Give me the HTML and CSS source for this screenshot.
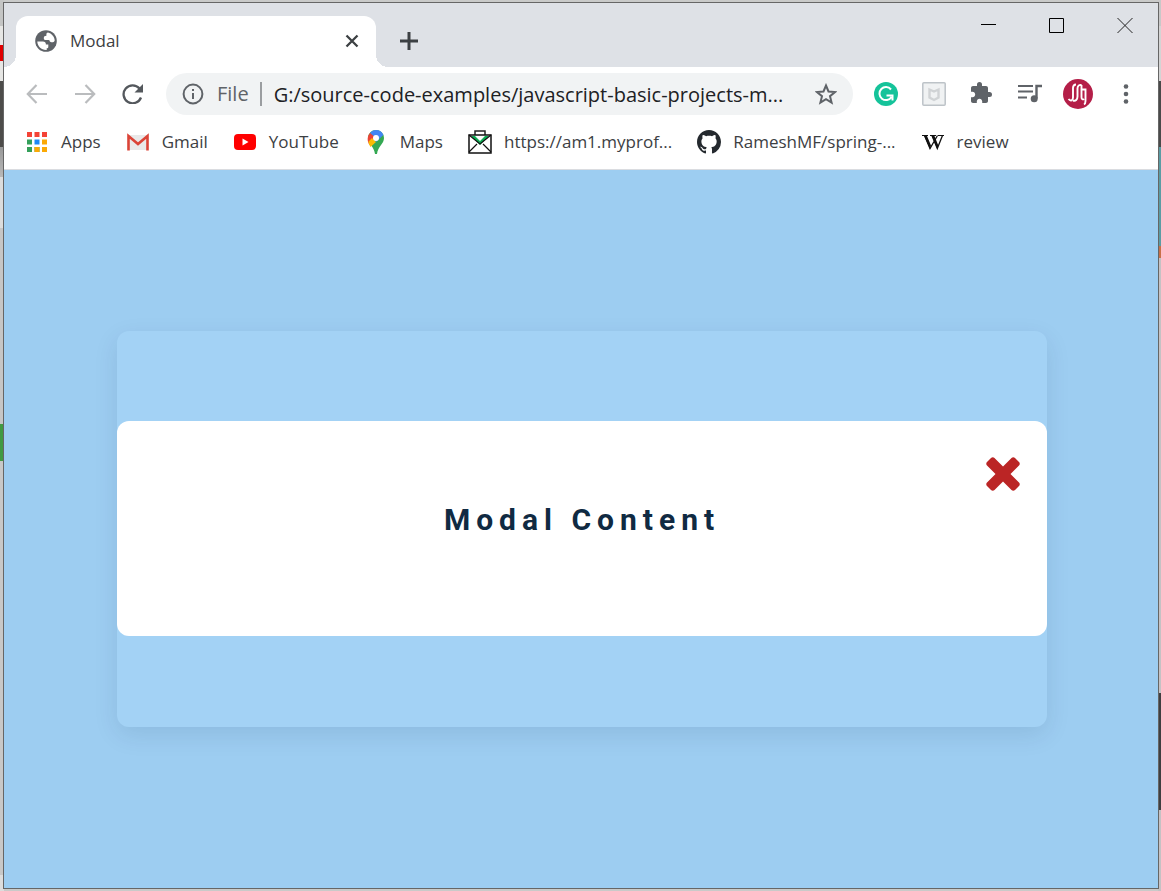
FILE: index.html
```html
<!DOCTYPE html>
<html lang="en">
<head>
  <meta charset="UTF-8">
  <title>Modal</title>
  <link rel="stylesheet" href="styles.css">
</head>
<body>
  <div class="window">
    <header class="tab-strip">
      <div class="tab">
        <svg class="globe" width="22" height="22" viewBox="0 0 22 22"><circle cx="11" cy="11" r="10.8" fill="#5f6368"/><path d="M2.3 11.6h5.6c2 0 3 1.2 3 3h2.4v2.3c0 .9-.6 1.300-1.600 1.300v1.700C6.500 20.200 2.500 16.500 2.300 11.600zM13 2.400c3.600.9 6.500 4.200 6.700 8-.6 1.700-1.800 2-3.200 1.900-1.300-.1-2.200-1-2.200-2.200h-3.600c-1.300 0-1.900-.8-1.900-1.900 0-1.600 1-2.400 2.600-2.400V4.300c0-1.100.5-1.700 1.600-1.900z" fill="#fff"/></svg>
        <span class="tab-title">Modal</span>
        <button class="icon-btn" aria-label="Close tab"><svg width="14" height="14" viewBox="0 0 14 14"><path d="M1.500 1.500l11 11M12.500 1.500l-11 11" stroke="#3c4043" stroke-width="2.300"/></svg></button>
      </div>
      <button class="icon-btn new-tab" aria-label="New tab"><svg width="18" height="18" viewBox="0 0 18 18"><path d="M9 0v18M0 9h18" stroke="#3c4043" stroke-width="3"/></svg></button>
      <div class="window-controls">
        <button class="icon-btn" aria-label="Minimize"><svg width="16" height="16" viewBox="0 0 16 16"><path d="M0 7.500h15" stroke="#000"/></svg></button>
        <button class="icon-btn" aria-label="Maximize"><svg width="16" height="16" viewBox="0 0 16 16"><path d="M.5 1.500h14v14H.5z" fill="none" stroke="#000"/></svg></button>
        <button class="icon-btn" aria-label="Close"><svg width="16" height="16" viewBox="0 0 16 16"><path d="M.5 1l15 15M15.500 1l-15 15" stroke="#222"/></svg></button>
      </div>
    </header>

    <div class="toolbar">
      <nav class="history">
        <button class="icon-btn" aria-label="Back"><svg width="22" height="20" viewBox="0 0 22 20"><path d="M21 10H2M10.500 1L1.800 10l8.700 9" fill="none" stroke="#babcbe" stroke-width="2.200"/></svg></button>
        <button class="icon-btn" aria-label="Forward"><svg width="22" height="20" viewBox="0 0 22 20"><path d="M1 10h19M11.500 1l8.700 9-8.700 9" fill="none" stroke="#babcbe" stroke-width="2.200"/></svg></button>
        <button class="icon-btn" aria-label="Reload"><svg width="22" height="20" viewBox="0 0 22 20"><path d="M19 13.500A9 9 0 1 1 17.500 4.500" fill="none" stroke="#54585d" stroke-width="2.300"/><path d="M21 0v8.500h-8.500z" fill="#54585d"/></svg></button>
      </nav>
      <div class="address">
        <svg width="22" height="22" viewBox="0 0 22 22"><circle cx="11" cy="11" r="9.400" fill="none" stroke="#5f6368" stroke-width="2"/><path d="M10 6h2v2h-2zM10 10h2v6h-2z" fill="#5f6368"/></svg>
        <label class="scheme" for="url">File</label>
        <input class="url" id="url" type="text" value="G:/source-code-examples/javascript-basic-projects-m...">
        <button class="icon-btn" aria-label="Bookmark this page"><svg width="22" height="22" viewBox="0 0 22 22"><path d="M11 2.500l2.500 6 6.500.5-5 4.200 1.600 6.400-5.600-3.500-5.600 3.500L7 13.200 2 9l6.500-.5z" fill="none" stroke="#5f6368" stroke-width="2"/></svg></button>
      </div>
      <div class="extensions">
        <button class="icon-btn" aria-label="Grammarly"><svg width="24" height="24" viewBox="0 0 24 24"><circle cx="12" cy="12" r="12" fill="#15c39a"/><path d="M17 7.500A6.500 6.500 0 1 0 17.500 15M12.500 13.500h6v5" fill="none" stroke="#fff" stroke-width="2"/></svg></button>
        <button class="icon-btn" aria-label="McAfee"><svg width="24" height="24" viewBox="0 0 24 24"><rect x=".8" y=".8" width="22.400" height="22.400" rx="1" fill="#f0f2f3" stroke="#bdc3c8" stroke-width="1.500"/><path d="M7.500 7.500l4.500 2 4.500-2v8L12 18l-4.500-2.500z" fill="none" stroke="#d0d3d5" stroke-width="2.400"/></svg></button>
        <button class="icon-btn" aria-label="Extensions"><svg width="24" height="24" viewBox="1 1 24 24"><path d="M20.500 11H19V7c0-1.100-.9-2-2-2h-4V3.500a2.500 2.500 0 0 0-5 0V5H4c-1.100 0-2 .9-2 2v3.800h1.500c1.500 0 2.700 1.200 2.700 2.700S5 16.200 3.500 16.200H2V20c0 1.100.9 2 2 2h3.800v-1.500c0-1.500 1.200-2.700 2.700-2.700s2.700 1.200 2.700 2.700V22H17c1.100 0 2-.9 2-2v-4h1.500a2.500 2.500 0 0 0 0-5z" fill="#5f6368"/></svg></button>
        <button class="icon-btn" aria-label="Media controls"><svg width="24" height="24" viewBox="0 0 24 24"><path d="M0 4h15M0 9.500h15M0 15.500h9" stroke="#5f6368" stroke-width="2.200"/><path d="M18.500 16.500V4H24" fill="none" stroke="#5f6368" stroke-width="2.400"/><circle cx="16.200" cy="16.800" r="3.500" fill="#5f6368"/></svg></button>
        <button class="icon-btn profile" aria-label="Profile"><svg width="30" height="30" viewBox="0 0 30 30"><circle cx="15" cy="15" r="15" fill="#b41e48"/><path d="M5.500 20c2 2.500 4.500 1.500 4.500-1.500V9c0-2.500 1-3.500 3-3.500M10 21.500c2.500 1 4.500-1 4.500-4V9.500c0-2.500 1.500-4 4-3.500M18.500 6v12c0 2 1 3 2.500 2M17.500 10.500h5v11.500c0 2-.5 3-1.500 3.500" fill="none" stroke="#fff" stroke-width="1.900"/></svg></button>
        <button class="icon-btn" aria-label="Menu"><svg width="6" height="20" viewBox="0 0 6 20"><g fill="#5f6368"><circle cx="3" cy="2.500" r="2.300"/><circle cx="3" cy="10" r="2.300"/><circle cx="3" cy="17.500" r="2.300"/></g></svg></button>
      </div>
    </div>

    <nav class="bookmarks">
      <a href="#"><svg width="24" height="24" viewBox="0 0 24 24"><path d="M2 2h5v5H2zM9.500 2h5v5h-5zM17 2h5v5h-5z" fill="#f44336"/><path d="M2 9.500h5v5H2zM2 17h5v5H2zM9.500 17h5v5h-5z" fill="#34a05a"/><path d="M9.500 9.500h5v5h-5z" fill="#1e88f5"/><path d="M17 9.500h5v5h-5zM17 17h5v5h-5zM9.500 17h5v5h-5z" fill="#fba905"/></svg><span>Apps</span></a>
      <a href="#"><svg width="24" height="24" viewBox="0 0 24 24"><path d="M2 5h20v15H2z" fill="#e9e9e9"/><path d="M2.500 20.500V6l9.500 8 9.500-8v14.500" fill="none" stroke="#db4437" stroke-width="2.600"/></svg><span>Gmail</span></a>
      <a href="#"><svg width="24" height="24" viewBox="0 0 24 24"><rect x="1" y="4" width="22" height="16" rx="4" fill="#f00"/><path d="M9.500 8.500l6 3.500-6 3.500z" fill="#fff"/></svg><span>YouTube</span></a>
      <a href="#"><svg width="24" height="24" viewBox="0 0 24 24"><path d="M12 0a8 8 0 0 1 8 8c0 6-6 8-7 16h-2C10 16 4 14 4 8a8 8 0 0 1 8-8z" fill="#34a853"/><path d="M12 0a8 8 0 0 1 7.300 5L12 12 6 3C7.500 1 9.600 0 12 0z" fill="#4285f4"/><path d="M6 3l6 5-6.500 7C2.500 10 3.500 6 6 3z" fill="#ea4335"/><path d="M4.500 11.500L8 8l4 4-5.500 5c-1-1.800-2-3.500-2-5.500z" fill="#fbbc04"/><circle cx="12" cy="8" r="3" fill="#fff"/></svg><span>Maps</span></a>
      <a href="#"><svg width="24" height="24" viewBox="0 0 24 24"><path d="M7 5V1h10v4" fill="none" stroke="#222" stroke-width="1.500"/><path d="M1 5h22v18H1z" fill="#fff" stroke="#111" stroke-width="1.500"/><path d="M3 6h4l5 5 5-5h4l-9 9z" fill="#0cad53"/><path d="M1 5l11 9L23 5M1 22l8-8M23 22l-8-8" fill="none" stroke="#111" stroke-width="1.200"/></svg><span>https://am1.myprof...</span></a>
      <a href="#"><svg width="24" height="24" viewBox="0 0 16 16"><path fill="#24292e" d="M8 0C3.580 0 0 3.580 0 8c0 3.540 2.290 6.530 5.470 7.590.4.070.55-.17.55-.38 0-.19-.01-.82-.01-1.490-2.010.37-2.530-.49-2.690-.94-.09-.23-.48-.94-.82-1.130-.28-.15-.68-.52-.01-.53.63-.01 1.080.58 1.230.82.720 1.210 1.870.87 2.330.66.070-.52.280-.87.510-1.070-1.780-.2-3.640-.89-3.640-3.950 0-.87.310-1.590.82-2.150-.08-.2-.36-1.020.08-2.120 0 0 .67-.21 2.200.82.640-.18 1.320-.27 2-.27s1.360.09 2 .27c1.530-1.040 2.200-.82 2.200-.82.440 1.100.160 1.920.08 2.120.510.56.820 1.270.820 2.150 0 3.070-1.870 3.750-3.650 3.950.290.250.540.730.540 1.480 0 1.070-.01 1.930-.01 2.200 0 .210.150.460.550.380A8.010 8.010 0 0 0 16 8c0-4.420-3.580-8-8-8z"/></svg><span>RameshMF/spring-...</span></a>
      <a href="#"><svg width="24" height="24" viewBox="0 0 24 24"><path d="M1 5.500h6M9 5.500h6M17 5.500h6" stroke="#111" stroke-width="1.200"/><path d="M3.500 5.500L9 18.500l7.500-13M11 5.500l5.300 13L21.500 5.500" fill="none" stroke="#111" stroke-width="1.300"/><path d="M3 5.500h2.800l4.200 10-1 3.500zM10.500 5.500h2.800l4 10-1 3.500z" fill="#111"/></svg><span>review</span></a>
    </nav>

    <main class="page">
      <section class="banner">
        <div class="modal">
          <h3>Modal Content</h3>
          <button class="close-btn" aria-label="Close modal"><svg width="34" height="34" viewBox="0 0 34 34"><path d="M1 8.500c-1-1-1-2.500 0-3.500l4-4c1-1 2.500-1 3.500 0L17 9.500 25.500 1c1-1 2.500-1 3.500 0l4 4c1 1 1 2.500 0 3.500L24.500 17l8.500 8.500c1 1 1 2.500 0 3.500l-4 4c-1 1-2.500 1-3.500 0L17 24.500 8.500 33c-1 1-2.500 1-3.500 0l-4-4c-1-1-1-2.500 0-3.500L9.500 17z" fill="#bb2525"/></svg></button>
        </div>
      </section>
    </main>
  </div>
</body>
</html>
```
FILE: styles.css
```css
:root {
  --page-color: #9dcdf1;
  --banner-color: #a3d2f5;
  --strip-color: #dee1e6;
  --icon-color: #5f6368;
  --text-color: #3c4043;
}

* {
  box-sizing: border-box;
}

/* slivers of the windows behind show at both edges */
body {
  margin: 0;
  padding: 2px 2px 2px 3px;
  min-height: 100vh;
  display: flex;
  font-family: "Open Sans", "Noto Sans", sans-serif;
  color: var(--text-color);
  background:
    linear-gradient(#c4c5c4 26px, #e6e6e4 26px 45px, #e00000 45px 61px, #e6e6e4 61px 81px, #4d4c4a 81px 147px, #999 147px, #b8b8b8 177px, #dcdcdc 177px 228px, #c6c6c6 228px 424px, #409a42 424px 461px, #c8c8c8 461px 875px, #ddd 875px) left / 4px 100% no-repeat,
    linear-gradient(#c8c8c8 26px, #d4d4d4 26px 81px, #4a4a4a 81px 147px, #5b9ca4 147px 246px, #c87048 246px 258px, #c4c2c4 258px 693px, #3f3f41 693px 810px, #c4c2c4 810px) right / 3px 100% no-repeat,
    #c9cac9;
}

.window {
  flex: 1;
  display: flex;
  flex-direction: column;
  border: 1px solid #666;
  background: #fff;
}

.icon-btn {
  display: flex;
  align-items: center;
  justify-content: center;
  padding: 0;
  border: none;
  background: transparent;
  cursor: pointer;
}

.tab-strip {
  display: flex;
  height: 64px;
  padding: 13px 25px 0 12px;
  background: var(--strip-color);
}

.tab {
  position: relative;
  display: flex;
  align-items: center;
  width: 360px;
  padding: 0 17px 2px 19px;
  border-radius: 12px 12px 0 0;
  background: #fff;
}

.tab::before,
.tab::after {
  content: "";
  position: absolute;
  bottom: 0;
  width: 12px;
  height: 12px;
}

.tab::before {
  right: 100%;
  background: radial-gradient(circle at 0 0, var(--strip-color) 12px, #fff 12px);
}

.tab::after {
  left: 100%;
  background: radial-gradient(circle at 100% 0, var(--strip-color) 12px, #fff 12px);
}

.tab-title {
  flex: 1;
  padding-left: 13px;
  font-size: 17px;
}

.new-tab {
  margin-left: 24px;
  padding-bottom: 2px;
}

.window-controls {
  display: flex;
  align-items: flex-start;
  gap: 52px;
  margin-left: auto;
  padding-top: 1px;
}

.toolbar {
  display: flex;
  align-items: center;
  padding: 6px 29px 5px 22px;
}

.history {
  display: flex;
  gap: 26px;
  padding-right: 22px;
}

.address {
  flex: 1;
  display: flex;
  align-items: center;
  height: 42px;
  padding: 0 16px;
  border-radius: 21px;
  background: #f1f3f4;
  font-size: 20px;
}

.scheme {
  padding: 0 11px 0 13px;
  border-right: 2px solid #9a9da0;
  line-height: 24px;
  color: var(--icon-color);
}

.url {
  flex: 1;
  min-width: 0;
  padding: 0 0 0 12px;
  border: none;
  outline: none;
  background: transparent;
  font: inherit;
  color: #202124;
}

.extensions {
  display: flex;
  align-items: center;
  gap: 24px;
  padding-left: 21px;
}

.profile {
  margin: 0 6px 0 -3px;
}

.bookmarks {
  display: flex;
  align-items: center;
  gap: 25px;
  height: 50px;
  padding: 0 21px 6px;
  border-bottom: 1px solid #dadce0;
}

.bookmarks a {
  display: flex;
  align-items: center;
  gap: 12px;
  font-size: 17px;
  white-space: nowrap;
  color: var(--text-color);
  text-decoration: none;
}

.page {
  flex: 1;
  display: flex;
  align-items: center;
  justify-content: center;
  padding: 40px 40px 40px 42px;
  background: var(--page-color);
}

.banner {
  width: 100%;
  max-width: 930px;
  padding: 90px 0 91px;
  border-radius: 12px;
  background: var(--banner-color);
  box-shadow: 0 8px 24px rgba(0, 40, 80, 0.1);
}

.modal {
  position: relative;
  padding: 78px 32px 96px;
  border-radius: 12px;
  background: #fff;
  text-align: center;
}

.modal h3 {
  margin: 0;
  font-family: Roboto, sans-serif;
  font-size: 30px;
  line-height: 41px;
  letter-spacing: 6px;
  color: #102a42;
}

.close-btn {
  position: absolute;
  top: 36px;
  right: 27px;
  display: flex;
  padding: 0;
  border: none;
  background: transparent;
  cursor: pointer;
}
```
